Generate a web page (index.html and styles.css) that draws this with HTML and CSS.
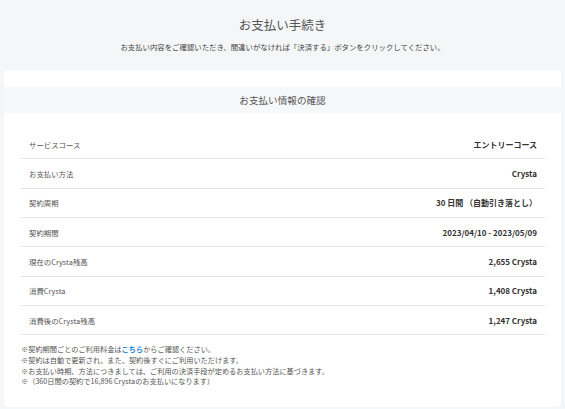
FILE: index.html
```html
<!DOCTYPE html>
<html lang="ja">
<head>
<meta charset="utf-8">
<title>お支払い手続き</title>
<link rel="stylesheet" href="styles.css">
</head>
<body>
<header class="page-head">
  <h1 class="title">お支払い手続き</h1>
  <p class="lead">お支払い内容をご確認いただき、間違いがなければ「決済する」ボタンをクリックしてください。</p>
</header>
<main class="card">
  <h2 class="card-head">お支払い情報の確認</h2>
  <div class="card-body">
    <dl class="rows">
      <div class="row"><dt>サービスコース</dt><dd>エントリーコース</dd></div>
      <div class="row"><dt>お支払い方法</dt><dd>Crysta</dd></div>
      <div class="row"><dt>契約周期</dt><dd>30 日間 （自動引き落とし）</dd></div>
      <div class="row"><dt>契約期間</dt><dd>2023/04/10 - 2023/05/09</dd></div>
      <div class="row"><dt>現在のCrysta残高</dt><dd>2,655 Crysta</dd></div>
      <div class="row"><dt>消費Crysta</dt><dd>1,408 Crysta</dd></div>
      <div class="row"><dt>消費後のCrysta残高</dt><dd>1,247 Crysta</dd></div>
    </dl>
    <ul class="notes">
      <li>※契約期間ごとのご利用料金は<a href="#" class="link">こちら</a>からご確認ください。</li>
      <li>※契約は自動で更新され、また、契約後すぐにご利用いただけます。</li>
      <li>※お支払い時期、方法につきましては、ご利用の決済手段が定めるお支払い方法に基づきます。</li>
      <li>※（360日間の契約で16,896 Crystaのお支払いになります）</li>
    </ul>
  </div>
</main>
</body>
</html>
```
FILE: styles.css
```css
html, body {
  margin: 0;
  padding: 0;
}
body {
  background: #f5f6f8;
  font-family: "Noto Sans CJK JP", "Noto Sans", sans-serif;
  color: #555;
  width: 565px;
  height: 409px;
  overflow: hidden;
}
.page-head {
  text-align: center;
  padding-top: 16px;
  height: 70px;
  box-sizing: border-box;
}
.title {
  margin: 0;
  font-size: 12.5px;
  font-weight: 400;
  line-height: 18px;
  color: #555;
}
.lead {
  margin: 8px 0 0;
  font-size: 7.4px;
  line-height: 10px;
  color: #444;
}
.card {
  display: block;
  margin: 0 4px;
  background: #fff;
  border-radius: 4px;
  padding: 17px 0 20px;
  box-shadow: 0 0 1px rgba(0,0,0,0.06);
}
.card-head {
  margin: 0;
  height: 26px;
  background: #f7f8fa;
  font-size: 9.6px;
  font-weight: 400;
  line-height: 26px;
  text-align: center;
  color: #555;
}
.card-body {
  padding: 17px 16px 0 17px;
}
.rows {
  margin: 0;
}
.row {
  display: flex;
  justify-content: space-between;
  align-items: center;
  height: 29.33px;
  box-sizing: border-box;
  border-bottom: 1px solid #e4e6e9;
  padding: 0 8px;
}
.row dt {
  font-size: 7.4px;
  color: #555;
}
.row dd {
  margin: 0;
  font-size: 8px;
  font-weight: 700;
  color: #333;
}
.notes {
  list-style: none;
  margin: 9px 0 0;
  padding: 0;
}
.notes li {
  font-size: 7.2px;
  line-height: 10.7px;
  color: #555;
}
.link {
  color: #1f7fd6;
  font-weight: 700;
  text-decoration: none;
}
```
